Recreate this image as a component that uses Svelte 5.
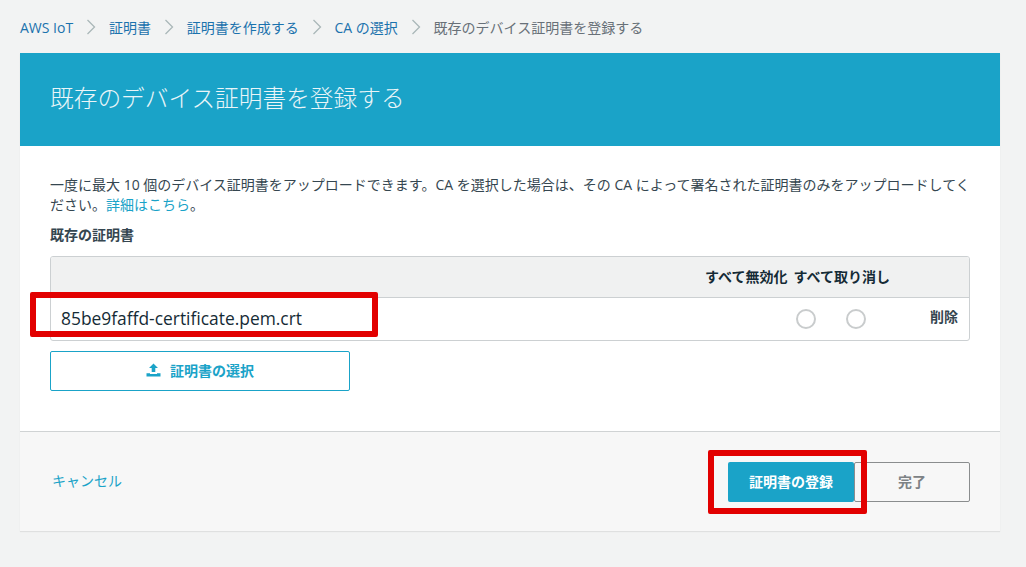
<script>
  const crumbs = ['AWS IoT', '証明書', '証明書を作成する', 'CA の選択'];
</script>

<div class="page">
  <nav class="breadcrumb">
    {#each crumbs as crumb}
      <a href="#top">{crumb}</a>
      <svg class="chevron" width="10" height="16" viewBox="0 0 10 16"><path d="M1.5 1 L8.5 8 L1.5 15" fill="none" stroke="#aab7b8" stroke-width="1.3" /></svg>
    {/each}
    <span class="current">既存のデバイス証明書を登録する</span>
  </nav>

  <section class="card">
    <header class="card-header">
      <h1>既存のデバイス証明書を登録する</h1>
    </header>

    <div class="card-body">
      <p class="intro">
        一度に最大 10 個のデバイス証明書をアップロードできます。CA を選択した場合は、その CA によって署名された証明書のみをアップロードしてください。<a href="#top">詳細はこちら</a>。
      </p>
      <div class="label">既存の証明書</div>

      <div class="table">
        <div class="table-head">
          <span class="head-action first">すべて無効化</span>
          <span class="head-action">すべて取り消し</span>
        </div>
        <div class="table-row">
          <span class="file">85be9faffd-certificate.pem.crt</span>
          <span class="radio first-radio"></span>
          <span class="radio"></span>
          <span class="remove">削除</span>
        </div>
      </div>

      <button class="select-btn">
        <svg width="15" height="14" viewBox="0 0 15 14"><path d="M7.5 0.5 L12 5 H9.3 V9 H5.7 V5 H3 Z M0.5 10.2 H4 V11 H11 V10.2 H14.5 V13.5 H0.5 Z" fill="#1aa3c8" /></svg>
        <span>証明書の選択</span>
      </button>
    </div>

    <footer class="card-footer">
      <a class="cancel" href="#top">キャンセル</a>
      <div class="actions">
        <button class="primary">証明書の登録</button>
        <button class="secondary">完了</button>
      </div>
    </footer>
  </section>

  <div class="mark mark-file"></div>
  <div class="mark mark-submit"></div>
</div>

<style>
  :global(body) {
    margin: 0;
    background: #f2f3f3;
  }

  .page {
    position: relative;
    width: 1026px;
    height: 567px;
    overflow: hidden;
    padding: 0 26px 0 20px;
    box-sizing: border-box;
    font-family: "Open Sans", "Noto Sans CJK JP", sans-serif;
    font-size: 14px;
    color: #152b36;
  }

  .breadcrumb {
    height: 53px;
    padding-top: 1px;
    box-sizing: border-box;
    display: flex;
    align-items: center;
    gap: 12.9px;
    font-size: 14px;
  }

  .breadcrumb a {
    color: #1b72ad;
    text-decoration: none;
  }

  .current {
    color: #687078;
  }

  .card {
    background: #fff;
    box-shadow: 0 1px 1px rgba(0, 0, 0, 0.08);
  }

  .card-header {
    height: 93px;
    box-sizing: border-box;
    background: #1aa3c8;
    display: flex;
    align-items: center;
    padding: 0 0 5px 30px;
  }

  h1 {
    margin: 0;
    font-size: 23.7px;
    font-weight: 300;
    color: #e9f5f8;
  }

  .card-body {
    height: 285px;
    box-sizing: border-box;
    padding: 29px 30px 0;
  }

  .intro {
    margin: 0;
    font-size: 14px;
    line-height: 20px;
    color: #354650;
  }

  .intro a {
    color: #1aa3c8;
    text-decoration: none;
  }

  .label {
    margin-top: 10px;
    font-size: 14px;
    line-height: 20px;
    font-weight: 600;
    color: #354650;
  }

  .table {
    margin-top: 11px;
    height: 85px;
    box-sizing: border-box;
    border: 1px solid #ccd0d2;
    border-radius: 3px;
    overflow: hidden;
  }

  .table-head {
    height: 41px;
    box-sizing: border-box;
    background: #f0f1f1;
    border-bottom: 1px solid #ccd0d2;
    display: flex;
    align-items: center;
    font-size: 14px;
    font-weight: 600;
    color: #152b36;
    padding: 0 0 2px 654px;
    gap: 6px;
  }

  .table-row {
    height: 42px;
    display: flex;
    align-items: center;
    padding-left: 10px;
  }

  .file {
    width: 735px;
    font-size: 17.4px;
    margin-top: -2px;
    color: #152b36;
  }

  .radio {
    width: 16px;
    height: 16px;
    border: 2px solid #c9cccd;
    border-radius: 50%;
    margin-left: 30px;
  }

  .first-radio {
    margin-left: 0;
  }

  .remove {
    margin-left: 64px;
    margin-top: -7px;
    font-size: 14px;
    font-weight: 600;
    color: #354650;
  }

  .select-btn {
    margin-top: 10px;
    padding: 0 0 3px 0;
    width: 300px;
    height: 40px;
    background: #fff;
    border: 1px solid #1aa3c8;
    border-radius: 2px;
    display: flex;
    align-items: center;
    justify-content: center;
    gap: 9px;
    font: inherit;
    font-size: 14px;
    font-weight: 600;
    color: #1aa3c8;
  }

  .card-footer {
    height: 100px;
    box-sizing: border-box;
    background: #f7f7f7;
    border-top: 1px solid #d0d3d4;
    display: flex;
    align-items: center;
    justify-content: space-between;
    padding: 0 30px 0 32px;
  }

  .cancel {
    color: #1aa3c8;
    font-size: 14px;
    text-decoration: none;
    margin-top: -4px;
  }

  .actions {
    display: flex;
  }

  .actions button {
    flex: none;
    height: 40px;
    padding: 0 0 2px;
    border-radius: 2px;
    font: inherit;
    font-size: 14px;
    font-weight: 600;
  }

  .primary {
    width: 126px;
    background: #1aa3c8;
    border: none;
    color: #fff;
  }

  .secondary {
    width: 116px;
    background: transparent;
    border: 1px solid #8a8d8e;
    color: #7d8285;
  }

  .mark {
    position: absolute;
    box-sizing: border-box;
    border: 6px solid #e20000;
    border-radius: 2px;
  }

  .mark-file {
    left: 30px;
    top: 292px;
    width: 348px;
    height: 45px;
  }

  .mark-submit {
    left: 708px;
    top: 450px;
    width: 159px;
    height: 64px;
  }
</style>
